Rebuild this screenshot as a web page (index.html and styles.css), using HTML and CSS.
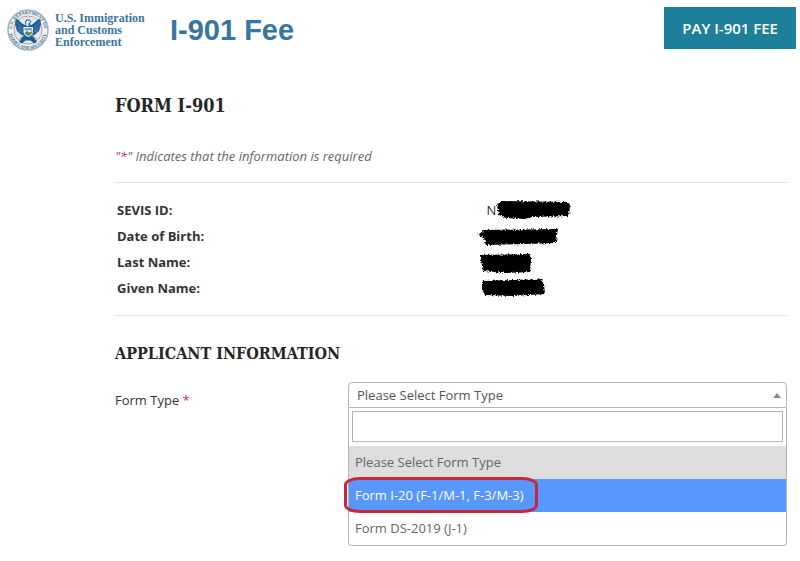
FILE: index.html
```html
<!DOCTYPE html>
<html lang="en">
<head>
    <meta charset="UTF-8">
    <meta name="viewport" content="width=device-width, initial-scale=1.0">
    <title>I-901 Fee</title>
    <link rel="stylesheet" href="styles.css">
</head>
<body>
    <header class="site-header">
        <a class="brand" href="#">
            <svg class="seal" viewBox="0 0 84 84" aria-hidden="true">
                <defs>
                    <path id="arcTop" d="M10 42a32 32 0 0 1 64 0"/>
                    <path id="arcBottom" d="M4 42a38 38 0 0 0 76 0"/>
                </defs>
                <circle cx="42" cy="42" r="40" fill="#eef2f3" stroke="#9db3c3" stroke-width="3"/>
                <circle cx="42" cy="42" r="28" fill="#fff" stroke="#c98a90" stroke-width="2"/>
                <circle cx="42" cy="42" r="26" fill="#dce9f0"/>
                <text class="seal-text"><textPath href="#arcTop" startOffset="50%" text-anchor="middle">U.S. DEPARTMENT OF</textPath></text>
                <text class="seal-text"><textPath href="#arcBottom" startOffset="50%" text-anchor="middle">HOMELAND SECURITY</textPath></text>
                <!-- eagle -->
                <path fill="#1d5f95" d="M36 26l3-5 6 0 4 4-3 3 1 5 6-4 10-9 4 1 1 10-4 13-9 8-5 1 5 5 5 8-6 3-7-6h-10l-7 6-6-3 5-8 5-5-5-1-9-8-4-13 1-10 4-1 9 9 7 4z"/>
                <path fill="#f4f7f8" d="M38 26l3-3h4l2 3-4 2v6h-4z"/>
                <path fill="none" stroke="#8eb5cf" stroke-width="1" d="M20 27l11 12M19 34l12 9M22 42l9 5M65 27L53 39M66 34l-12 9M63 42l-9 5"/>
                <path fill="#f5f8f6" d="M33 36h19v10q-1 7-9 10-9-3-10-10z"/>
                <path fill="#7daac4" d="M35 38h15v5H35z"/>
                <path fill="#58875b" d="M35 48l5-4 5 3 6-3q-1 7-8 10-6-2-8-6z"/>
                <path fill="none" stroke="#c1a86c" stroke-width="2" d="M24 60l8-6M60 60l-8-6"/>
            </svg>
            <span class="agency">U.S. Immigration<br>and Customs<br>Enforcement</span>
            <span class="brand-title">I-901 Fee</span>
        </a>
        <button type="button" class="pay-button">PAY I-901 FEE</button>
    </header>

    <main class="content">
        <h1>FORM I-901</h1>
        <p class="note">"<span class="required">*</span>" Indicates that the information is required</p>

        <div class="summary">
            <table>
                <tr><th scope="row">SEVIS ID:</th><td>N</td></tr>
                <tr><th scope="row">Date of Birth:</th><td></td></tr>
                <tr><th scope="row">Last Name:</th><td></td></tr>
                <tr><th scope="row">Given Name:</th><td></td></tr>
            </table>
            <!-- blacked out values -->
            <svg class="redaction" viewBox="0 0 100 104" aria-hidden="true">
                <filter id="rough" x="-10%" y="-10%" width="120%" height="120%">
                    <feTurbulence type="fractalNoise" baseFrequency="0.6" numOctaves="3" seed="4"/>
                    <feDisplacementMap in="SourceGraphic" scale="4" xChannelSelector="R" yChannelSelector="G"/>
                </filter>
                <g filter="url(#rough)">
                    <path d="M22 8l4-4 67 1 2 3-1 11-37 1-8 2-17-1-8-3z"/>
                    <path d="M3 38l6-5 74-1-1 5-1 9-30 1-40 1-2-7z"/>
                    <path d="M5 58l49-1 2 4-1 14-24 1-23-2z"/>
                    <path d="M7 84l60-2 2 6 1 9-32 2-28-1-3-6z"/>
                </g>
            </svg>
        </div>

        <h2>APPLICANT INFORMATION</h2>
        <form class="form-row">
            <label for="formType">Form Type <span class="required">*</span></label>
            <div class="picker">
                <div class="picker-box">
                    <select id="formType">
                        <option>Please Select Form Type</option>
                        <option>Form I-20 (F-1/M-1, F-3/M-3)</option>
                        <option>Form DS-2019 (J-1)</option>
                    </select>
                </div>
                <div class="dropdown">
                    <div class="search">
                        <input type="text" aria-label="Search form types">
                    </div>
                    <ul role="listbox" aria-label="Form Type">
                        <li role="option" class="selected" aria-selected="true">Please Select Form Type</li>
                        <li role="option" class="highlighted" aria-selected="false"><span class="callout">Form I-20 (F-1/M-1, F-3/M-3)</span></li>
                        <li role="option" aria-selected="false">Form DS-2019 (J-1)</li>
                    </ul>
                </div>
            </div>
        </form>
    </main>
</body>
</html>
```
FILE: styles.css
```css
:root {
    --teal: #1d7f99;
    --blue: #38759f;
    --red: #d9303b;
    --border: #b4b4b4;
}

* {
    box-sizing: border-box;
}

body {
    margin: 0;
    background: #fff;
    color: #333;
    font-family: 'Open Sans', sans-serif;
    font-size: 13px;
    line-height: 20px;
}

/* Header */
.site-header {
    display: flex;
    justify-content: space-between;
    align-items: flex-start;
    padding: 7px 4px 0 7px;
}

.brand {
    display: flex;
    align-items: center;
    color: var(--blue);
    text-decoration: none;
}

.seal {
    width: 42px;
    height: 46px;
    margin-right: 6px;
}

.seal-text {
    fill: #42698a;
    font-family: 'Liberation Serif', serif;
    font-size: 9px;
    font-weight: bold;
}

.agency {
    width: 115px;
    font-family: 'Liberation Serif', serif;
    font-size: 12px;
    font-weight: bold;
    line-height: 12px;
}

.brand-title {
    font-family: 'Liberation Sans', sans-serif;
    font-size: 29px;
    font-weight: bold;
    line-height: 46px;
}

.pay-button {
    height: 42px;
    padding: 0 18px;
    border: 0;
    background: var(--teal);
    color: #fff;
    font-family: inherit;
    font-size: 15px;
    font-weight: 600;
}

/* Content */
.content {
    padding: 0 13px 16px 115px;
}

h1,
h2 {
    margin: 0;
    color: #262626;
    font-family: 'DejaVu Serif Condensed', 'DejaVu Serif', serif;
    font-weight: bold;
    line-height: 24px;
}

h1 {
    margin-top: 41px;
    font-size: 18px;
}

h2 {
    margin-top: 26px;
    font-size: 16px;
}

.note {
    margin: 28px 0 16px;
    color: #666;
    font-style: italic;
}

.required {
    color: var(--red);
}

/* Applicant summary */
.summary {
    position: relative;
    padding: 14px 0;
    border-top: 1px solid #e2e2e2;
    border-bottom: 1px solid #e2e2e2;
}

table {
    width: 100%;
    border-collapse: collapse;
}

th,
td {
    height: 26px;
    padding: 0 2px;
    text-align: left;
}

th {
    width: 55%;
}

.redaction {
    position: absolute;
    top: 14px;
    left: 360px;
    width: 100px;
    height: 104px;
}

/* Form type picker */
.form-row {
    display: flex;
    margin-top: 16px;
}

.form-row label {
    flex: 0 0 233px;
    padding-top: 8px;
}

.picker {
    flex: 1;
    color: #555;
}

.picker-box {
    position: relative;
    border: 1px solid var(--border);
    border-radius: 4px 4px 0 0;
}

.picker-box::after {
    content: '';
    position: absolute;
    top: 10px;
    right: 5px;
    border: 4px solid transparent;
    border-top: 0;
    border-bottom: 5px solid #888;
}

select {
    display: block;
    width: 100%;
    height: 24px;
    padding: 0 8px;
    appearance: none;
    border: 0;
    background: none;
    color: inherit;
    font: inherit;
}

.dropdown {
    border: 1px solid var(--border);
    border-top: 0;
    border-radius: 0 0 4px 4px;
}

.search {
    padding: 3px 3px 4px;
}

.search input {
    display: block;
    width: 100%;
    height: 31px;
    padding: 4px;
    border: 1px solid var(--border);
    font: inherit;
}

ul {
    margin: 0;
    padding: 0;
    list-style: none;
}

li {
    padding: 0 6px;
    color: #666;
    line-height: 33px;
}

.selected {
    background: #ddd;
}

.highlighted {
    background: #5897fb;
    color: #fff;
}

.callout {
    position: relative;
}

.callout::after {
    content: '';
    position: absolute;
    inset: -9px -14px -9px -11px;
    border: 3px solid #c9263a;
    border-radius: 16px / 8px;
}
```
